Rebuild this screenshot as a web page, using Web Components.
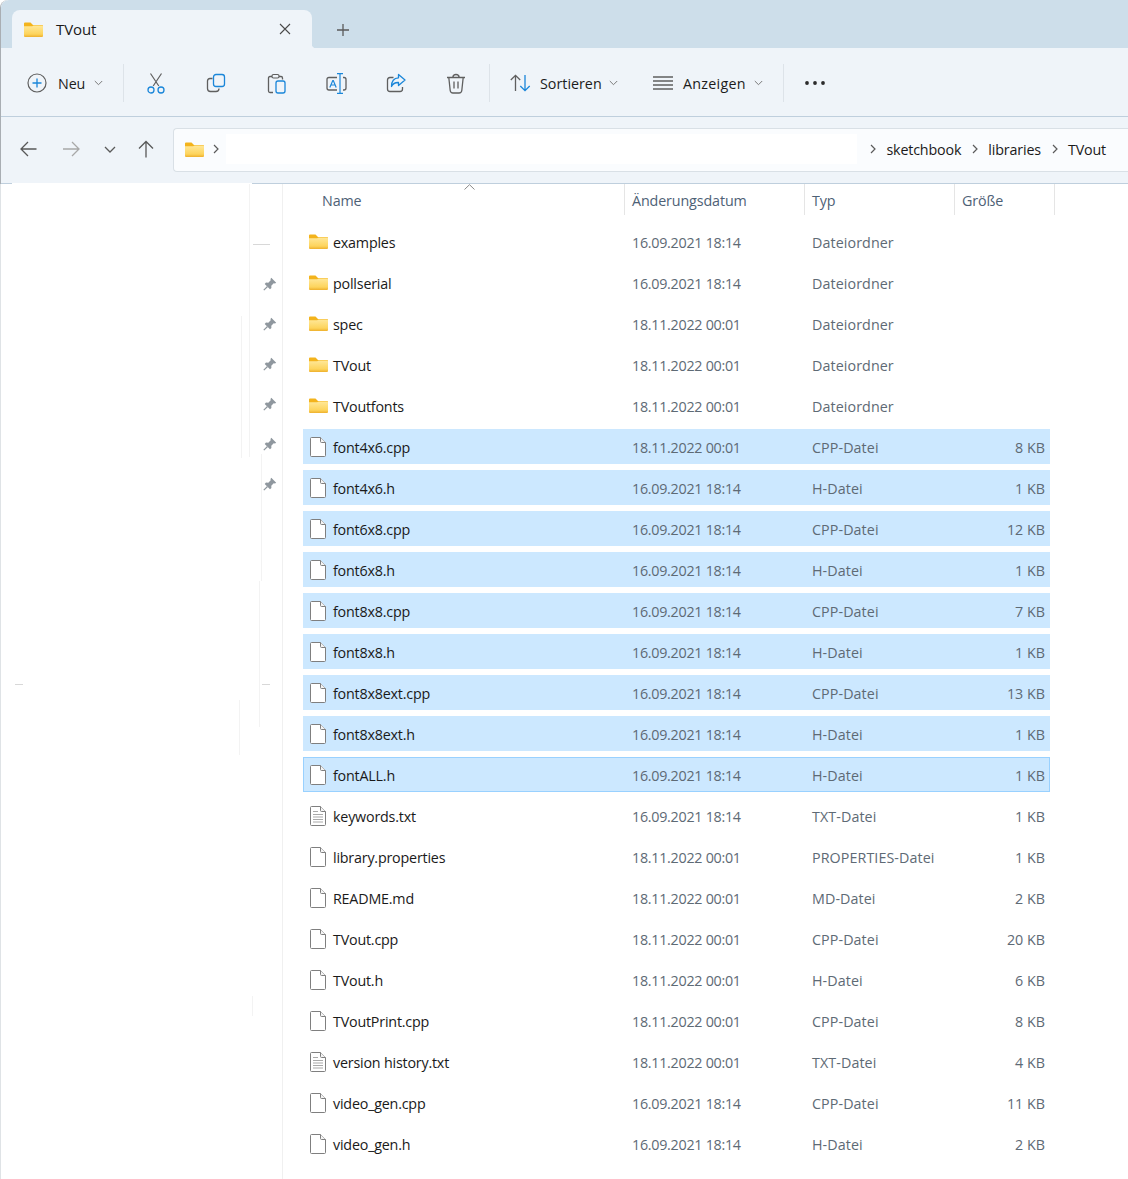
<!DOCTYPE html>
<html lang="de"><head><meta charset="utf-8"><title>TVout</title>
<style>
html,body{margin:0;padding:0;background:#fff;height:1179px;overflow:hidden}
body{font:14.3px "Open Sans","Noto Sans",sans-serif;color:#1a1a1a}
</style></head><body>
<x-window>
  <x-tabbar slot="tabs" label="TVout"></x-tabbar>
  <x-toolbar slot="tools"></x-toolbar>
  <x-addressbar slot="address">
    <x-crumb>sketchbook</x-crumb><x-crumb>libraries</x-crumb><x-crumb>TVout</x-crumb>
  </x-addressbar>
  <x-sidebar slot="side"></x-sidebar>
  <x-filelist slot="main">
    <x-row icon="folder" date="16.09.2021 18:14" type="Dateiordner">examples</x-row>
    <x-row icon="folder" date="16.09.2021 18:14" type="Dateiordner">pollserial</x-row>
    <x-row icon="folder" date="18.11.2022 00:01" type="Dateiordner">spec</x-row>
    <x-row icon="folder" date="18.11.2022 00:01" type="Dateiordner">TVout</x-row>
    <x-row icon="folder" date="18.11.2022 00:01" type="Dateiordner">TVoutfonts</x-row>
    <x-row selected icon="file" date="18.11.2022 00:01" type="CPP-Datei" size="8 KB">font4x6.cpp</x-row>
    <x-row selected icon="file" date="16.09.2021 18:14" type="H-Datei" size="1 KB">font4x6.h</x-row>
    <x-row selected icon="file" date="16.09.2021 18:14" type="CPP-Datei" size="12 KB">font6x8.cpp</x-row>
    <x-row selected icon="file" date="16.09.2021 18:14" type="H-Datei" size="1 KB">font6x8.h</x-row>
    <x-row selected icon="file" date="16.09.2021 18:14" type="CPP-Datei" size="7 KB">font8x8.cpp</x-row>
    <x-row selected icon="file" date="16.09.2021 18:14" type="H-Datei" size="1 KB">font8x8.h</x-row>
    <x-row selected icon="file" date="16.09.2021 18:14" type="CPP-Datei" size="13 KB">font8x8ext.cpp</x-row>
    <x-row selected icon="file" date="16.09.2021 18:14" type="H-Datei" size="1 KB">font8x8ext.h</x-row>
    <x-row selected focused icon="file" date="16.09.2021 18:14" type="H-Datei" size="1 KB">fontALL.h</x-row>
    <x-row icon="txt" date="16.09.2021 18:14" type="TXT-Datei" size="1 KB">keywords.txt</x-row>
    <x-row icon="file" date="18.11.2022 00:01" type="PROPERTIES-Datei" size="1 KB">library.properties</x-row>
    <x-row icon="file" date="18.11.2022 00:01" type="MD-Datei" size="2 KB">README.md</x-row>
    <x-row icon="file" date="18.11.2022 00:01" type="CPP-Datei" size="20 KB">TVout.cpp</x-row>
    <x-row icon="file" date="18.11.2022 00:01" type="H-Datei" size="6 KB">TVout.h</x-row>
    <x-row icon="file" date="18.11.2022 00:01" type="CPP-Datei" size="8 KB">TVoutPrint.cpp</x-row>
    <x-row icon="txt" date="18.11.2022 00:01" type="TXT-Datei" size="4 KB">version history.txt</x-row>
    <x-row icon="file" date="16.09.2021 18:14" type="CPP-Datei" size="11 KB">video_gen.cpp</x-row>
    <x-row icon="file" date="16.09.2021 18:14" type="H-Datei" size="2 KB">video_gen.h</x-row>
  </x-filelist>
</x-window>
<script>
const G='#5f5f5f',B='#1a86d9';
const svg=(w,h,b)=>`<svg xmlns="http://www.w3.org/2000/svg" width="${w}" height="${h}" viewBox="0 0 ${w} ${h}" fill="none" style="display:block">${b}</svg>`;
const ICONS={
 folder:svg(19,15,`<defs><linearGradient id="f" x1="0" y1="0" x2="0" y2="1"><stop offset="0" stop-color="#ffe89a"/><stop offset=".75" stop-color="#fdd45c"/><stop offset="1" stop-color="#eeb02c"/></linearGradient></defs><path d="M0 1.5Q0 .5 1 .5H6.5L9 3H18Q19 3 19 4V6H0Z" fill="#f3b31c"/><path d="M0 4.2H8.2L9.6 3.4H18Q19 3.4 19 4.4V14Q19 15 18 15H1Q0 15 0 14Z" fill="url(#f)"/>`),
 file:svg(16,20,`<path d="M.5 1.5Q.5.5 1.5.5H10.5L15.5 5.5V18.5Q15.5 19.5 14.5 19.5H1.5Q.5 19.5.5 18.5Z" fill="#fff" stroke="#7f7f7f"/><path d="M10.5.5V4.5Q10.5 5.5 11.5 5.5H15.5" stroke="#7f7f7f" fill="#f4f4f4"/>`),
 txt:svg(16,20,`<path d="M.5 1.5Q.5.5 1.5.5H10.5L15.5 5.5V18.5Q15.5 19.5 14.5 19.5H1.5Q.5 19.5.5 18.5Z" fill="#fff" stroke="#7f7f7f"/><path d="M10.5.5V4.5Q10.5 5.5 11.5 5.5H15.5" stroke="#7f7f7f" fill="#f4f4f4"/><path d="M3 5.5H8M3 8.5H13M3 11H13M3 13.5H13M3 16H13" stroke="#a9a9a9"/>`),
 plus:svg(20,20,`<circle cx="10" cy="10" r="9" stroke="${G}" stroke-width="1.2"/><path d="M10 5.5V14.5M5.5 10H14.5" stroke="${B}" stroke-width="1.3"/>`),
 cut:svg(20,21,`<path d="M4.5 .5L12.8 13M15.5 .5L7.2 13" stroke="${G}" stroke-width="1.2"/><circle cx="5" cy="17" r="3" stroke="${B}" stroke-width="1.3"/><circle cx="15" cy="17" r="3" stroke="${B}" stroke-width="1.3"/>`),
 copy:svg(20,20,`<path d="M6.5 5.5H4Q1.5 5.5 1.5 8V15.5Q1.5 18.5 4.500 18.500H10Q13 18.5 13 15.500" stroke="${G}" stroke-width="1.3"/><rect x="7.500" y="1.500" width="11" height="12" rx="2.500" stroke="${B}" stroke-width="1.3"/>`),
 paste:svg(20,21,`<path d="M6 3.500H4Q2.500 3.500 2.500 5V18Q2.500 19.500 4 19.500H7M13 3.500H15Q16.500 3.500 16.500 5V6.500" stroke="${G}" stroke-width="1.3"/><rect x="6" y="1.500" width="7" height="3.500" rx="1.500" stroke="${G}" stroke-width="1.2"/><rect x="10" y="8" width="9" height="12" rx="2" stroke="${B}" stroke-width="1.3"/>`),
 rename:svg(21,21,`<path d="M11 4.500H3Q1 4.500 1 6.500V15Q1 17 3 17H11M17 4.500H18Q20 4.500 20 6.500V15Q20 17 18 17H17" stroke="${G}" stroke-width="1.3"/><path d="M11 .7H17M11 20.300H17M14 .7V20.300M3.800 14.500L6.800 7.500H7.300L10.200 14.500M4.900 12H9.200" stroke="${B}" stroke-width="1.200"/>`),
 share:svg(20,20,`<path d="M7.500 4.500H4Q1.500 4.500 1.500 7V16Q1.500 18.500 4 18.500H14Q16.500 18.500 16.500 16V14" stroke="${G}" stroke-width="1.3"/><path d="M12.500 1.500L19 7L12.500 12.500V9.500C9 9.300 6.800 10.800 5.500 13.500C5.500 8.500 8 5 12.500 4.800Z" stroke="${B}" stroke-width="1.3" stroke-linejoin="round"/>`),
 trash:svg(20,21,`<path d="M1 4.500H19M6.800 4.500Q7 1.500 10 1.500Q13 1.500 13.200 4.500M2.800 4.500L4.200 17.500Q4.500 20 7 20H13Q15.500 20 15.800 17.500L17.200 4.500M8 8.500V15.500M12 8.500V15.500" stroke="${G}" stroke-width="1.300"/>`),
 sort:svg(21,18,`<path d="M5.500 17V1.500M.8 6L5.500 1.300L10.200 6" stroke="${G}" stroke-width="1.300"/><path d="M15 1V16.500M10.300 12L15 16.700L19.700 12" stroke="${B}" stroke-width="1.300"/>`),
 view:svg(20,14,`<path d="M0 1H20M0 5H20M0 9H20M0 13H20" stroke="${G}" stroke-width="1.300"/>`),
 dots:svg(22,6,`<circle cx="3" cy="3" r="1.900" fill="#2b2b2b"/><circle cx="11" cy="3" r="1.900" fill="#2b2b2b"/><circle cx="19" cy="3" r="1.900" fill="#2b2b2b"/>`),
 chev:svg(9,6,`<path d="M.8 1L4.500 4.700L8.200 1" stroke="#7a7a7a"/>`),
 chevd:svg(12,7,`<path d="M1 1L6 6L11 1" stroke="#5a5a5a" stroke-width="1.300"/>`),
 crumb:svg(6,10,`<path d="M1 1L5 5L1 9" stroke="#5a5a5a" stroke-width="1.200"/>`),
 back:svg(17,16,`<path d="M1 8H16.500M8 1L1 8L8 15" stroke="#585858" stroke-width="1.300"/>`),
 fwd:svg(17,16,`<path d="M0 8H15.500M9 1L16 8L9 15" stroke="#a8a8a8" stroke-width="1.300"/>`),
 up:svg(16,18,`<path d="M8 17.500V1.500M1 8.500L8 1.500L15 8.500" stroke="#585858" stroke-width="1.300"/>`),
 close:svg(12,12,`<path d="M1 1L11 11M11 1L1 11" stroke="#4a4a4a" stroke-width="1.100"/>`),
 add:svg(12,12,`<path d="M6 0V12M0 6H12" stroke="#5a5a5a" stroke-width="1.300"/>`),
 pin:svg(14,14,`<path d="M8.300 .8L13.200 5.700L12 6.500L10.700 6.300L8.300 8.700L8.400 11L7 12.300L1.700 7L3 5.600L5.300 5.700L7.700 3.300L7.500 2Z" fill="#8f979e"/><path d="M4.500 9.500L.8 13.200" stroke="#8f979e" stroke-width="1.200"/>`),
 caret:svg(11,6,`<path d="M.5 5.500L5.500 .7L10.500 5.500" stroke="#8a8a8a"/>`)
};
function def(tag,css,html,extra){
  const T=document.createElement('template');
  T.innerHTML=`<style>${css}</style>${html}`;
  customElements.define(tag,class extends HTMLElement{
    constructor(){super();this.attachShadow({mode:'open'}).appendChild(T.content.cloneNode(true));}
    connectedCallback(){extra&&extra.call(this,this.shadowRoot);}
  });
}
def('x-icon',':host{display:inline-flex;flex:none}','',function(r){
  if(r.querySelector('span'))return;
  const s=document.createElement('span');s.style.display='contents';s.innerHTML=ICONS[this.getAttribute('name')]||'';r.appendChild(s);
});
def('x-window',`
:host{display:grid;grid-template-columns:283px 1fr;grid-template-rows:48px 69px 67px 1fr;width:1128px;height:1179px;box-sizing:border-box;position:relative}
.a{grid-column:1/3;display:block}
.t,.b,.c{border-left:1px solid #a9aeb3}
.t{border-top-left-radius:8px}
`,`<div class="a t"><slot name="tabs"></slot></div><div class="a b"><slot name="tools"></slot></div><div class="a c"><slot name="address"></slot></div><slot name="side"></slot><slot name="main"></slot>`);
def('x-tabbar',`
:host{display:flex;height:48px;background:#cddeea;padding:10px 0 0 11px;box-sizing:border-box;align-items:stretch;border-top-left-radius:8px}
.tab{width:300px;background:#eff4f9;border-radius:8px 8px 0 0;display:flex;align-items:center;padding:0 21px 0 12px;box-sizing:border-box;font-size:15px;font-weight:500;position:relative;letter-spacing:-.1px}
.tab::after{content:"";position:absolute;right:-4px;bottom:0;width:4px;height:4px;background:radial-gradient(circle at 100% 0,transparent 4px,#eff4f9 4.5px)}
.lab{margin-left:13px;flex:1;color:#1a1a1a}
.add{margin-left:25px;align-self:center;margin-top:2px}
`,`<div class="tab"><x-icon class="ic" name="folder"></x-icon><span class="lab"></span><x-icon class="ic" name="close"></x-icon></div><x-icon class="add" name="add"></x-icon>`,function(r){r.querySelector('.lab').textContent=this.getAttribute('label')});
def('x-toolbar',`
:host{display:flex;align-items:center;height:69px;background:#eff4f9;border-bottom:1px solid #bfcfdd;box-sizing:border-box;padding:2px 0 0 26px;color:#1c1c1c;font-size:14.3px;letter-spacing:-.1px}
.sep{width:1px;height:38px;background:#dde3e9;flex:none}
.txt{display:inline-block}
.i60{width:60px;display:flex;justify-content:center;flex:none}
.tb{display:flex;align-items:center;flex:none}
`,`
<div class="tb" style="width:96px"><x-icon name="plus"></x-icon><span class="txt" style="margin-left:11px;width:36px">Neu</span><x-icon name="chev"></x-icon></div>
<div class="sep"></div>
<div style="display:flex;margin-left:2px">
<div class="i60"><x-icon name="cut"></x-icon></div><div class="i60"><x-icon name="copy"></x-icon></div><div class="i60"><x-icon name="paste"></x-icon></div><div class="i60"><x-icon name="rename"></x-icon></div><div class="i60"><x-icon name="share"></x-icon></div><div class="i60"><x-icon name="trash"></x-icon></div>
</div>
<div class="sep" style="margin-left:3px"></div>
<div class="tb" style="margin-left:20px;width:108px"><x-icon name="sort"></x-icon><span class="txt" style="margin-left:9px;width:69px;letter-spacing:0">Sortieren</span><x-icon name="chev"></x-icon></div>
<div class="tb" style="margin-left:35px;width:110px"><x-icon name="view"></x-icon><span class="txt" style="margin-left:10px;width:71px;letter-spacing:.25px">Anzeigen</span><x-icon name="chev"></x-icon></div>
<div class="sep" style="margin-left:20px"></div>
<div class="tb" style="margin-left:20px"><x-icon name="dots"></x-icon></div>
`);
def('x-addressbar',`
:host{display:flex;align-items:center;height:67px;background:#eff4f9;border-bottom:1px solid #bfcfdd;box-sizing:border-box;padding-left:19px}
.n{display:flex;align-items:center;flex:none;padding-bottom:2px}
.bar{flex:1;height:44px;background:#fafcfe;border:1px solid #d9e0e6;border-right:0;border-radius:4px 0 0 4px;box-sizing:border-box;display:flex;align-items:center;padding:0 22px 2px 11px;margin-left:19px;min-width:0}
.white{flex:1;height:30px;background:#fff;margin:0 2px 0 7px}
.c{display:flex;align-items:center;font-size:14.3px;color:#1a1a1a;letter-spacing:-.16px}
`,`
<div class="n"><x-icon name="back"></x-icon><x-icon name="fwd" style="margin-left:26px"></x-icon><x-icon name="chevd" style="margin-left:24px"></x-icon><x-icon name="up" style="margin-left:22px"></x-icon></div>
<div class="bar"><x-icon name="folder"></x-icon><x-icon name="crumb" style="margin-left:9px"></x-icon><div class="white"></div><div class="c"><slot></slot></div></div>
`);
def('x-crumb',`
:host{display:inline-flex;align-items:center}
x-icon{margin:0 10px 0 11px}
`,`<x-icon name="crumb"></x-icon><slot></slot>`);
def('x-sidebar',`
:host{display:flex;flex-direction:column;align-items:flex-end;position:relative;background:#fff;border-left:1px solid #dfe3e6;border-right:1px solid #f0f0f0;box-sizing:border-box;height:995px;padding-top:80px;padding-right:5px}
.p{height:40px;display:flex;align-items:center;width:14px}
.patch{position:absolute;top:-1px;left:11px;width:240px;height:1px;background:#fff}
.v{position:absolute;width:1px;background:#f3f3f3}
.d{position:absolute;height:1px;background:#d8d8d8}
`,`<div class="patch"></div>
<div class="p"><x-icon name="pin"></x-icon></div><div class="p"><x-icon name="pin"></x-icon></div><div class="p"><x-icon name="pin"></x-icon></div><div class="p"><x-icon name="pin"></x-icon></div><div class="p"><x-icon name="pin"></x-icon></div><div class="p"><x-icon name="pin"></x-icon></div>
<i class="d" style="left:252px;top:60px;width:17px"></i>
<i class="d" style="left:261px;top:500px;width:8px"></i>
<i class="d" style="left:14px;top:500px;width:8px"></i>
<i class="v" style="left:248px;top:0;height:273px"></i>
<i class="v" style="left:240px;top:132px;height:142px"></i>
<i class="v" style="left:260px;top:270px;height:127px"></i>
<i class="v" style="left:258px;top:397px;height:146px"></i>
<i class="v" style="left:238px;top:516px;height:55px"></i>
<i class="v" style="left:251px;top:812px;height:20px"></i>
`);
def('x-filelist',`
:host{display:block;background:#fff;font-size:14.3px}
.h{display:grid;grid-template-columns:342px 180px 150px 100px;height:31px;color:#4e6176;letter-spacing:-.12px}
.h div{border-right:1px solid #e5e5e5;padding:2px 0 0 7px;display:flex;align-items:center;box-sizing:border-box;position:relative}
.h div:first-child{padding-left:39px}
.caret{position:absolute;left:181px;top:0}
.l{padding:9px 0 0 20px}
`,`<div class="h"><div>Name<x-icon class="caret" name="caret"></x-icon></div><div>Änderungsdatum</div><div>Typ</div><div>Größe</div></div><div class="l"><slot></slot></div>`);
def('x-row',`
:host{display:grid;grid-template-columns:329px 180px 1fr auto;align-items:center;width:747px;height:35px;margin-bottom:6px;box-sizing:border-box;padding-right:5px;color:#5e6a75}
:host([selected]){background:#cce8ff}
:host([focused]){box-shadow:inset 0 0 0 1px #99d1ff}
.n{display:flex;align-items:center;color:#1a1a1a;letter-spacing:-.2px}
.nm{display:block;padding-top:2px}
.ib{width:30px;display:flex;flex:none;padding-left:6px;box-sizing:border-box}
.ib.file{padding-left:7px}
.d{letter-spacing:-.27px;padding-top:2px}
.t{letter-spacing:.08px;padding-top:2px}
.s{padding-top:2px}
`,`<div class="n"><div class="ib"></div><span class="nm"><slot></slot></span></div><div class="d"></div><div class="t"></div><div class="s"></div>`,function(r){
  const ic=this.getAttribute('icon');
  const b=r.querySelector('.ib');
  b.innerHTML=`<x-icon name="${ic}"></x-icon>`;
  if(ic!=='folder')b.classList.add('file');
  r.querySelector('.d').textContent=this.getAttribute('date');
  r.querySelector('.t').textContent=this.getAttribute('type');
  r.querySelector('.s').textContent=this.getAttribute('size')||'';
});
</script>
</body></html>
